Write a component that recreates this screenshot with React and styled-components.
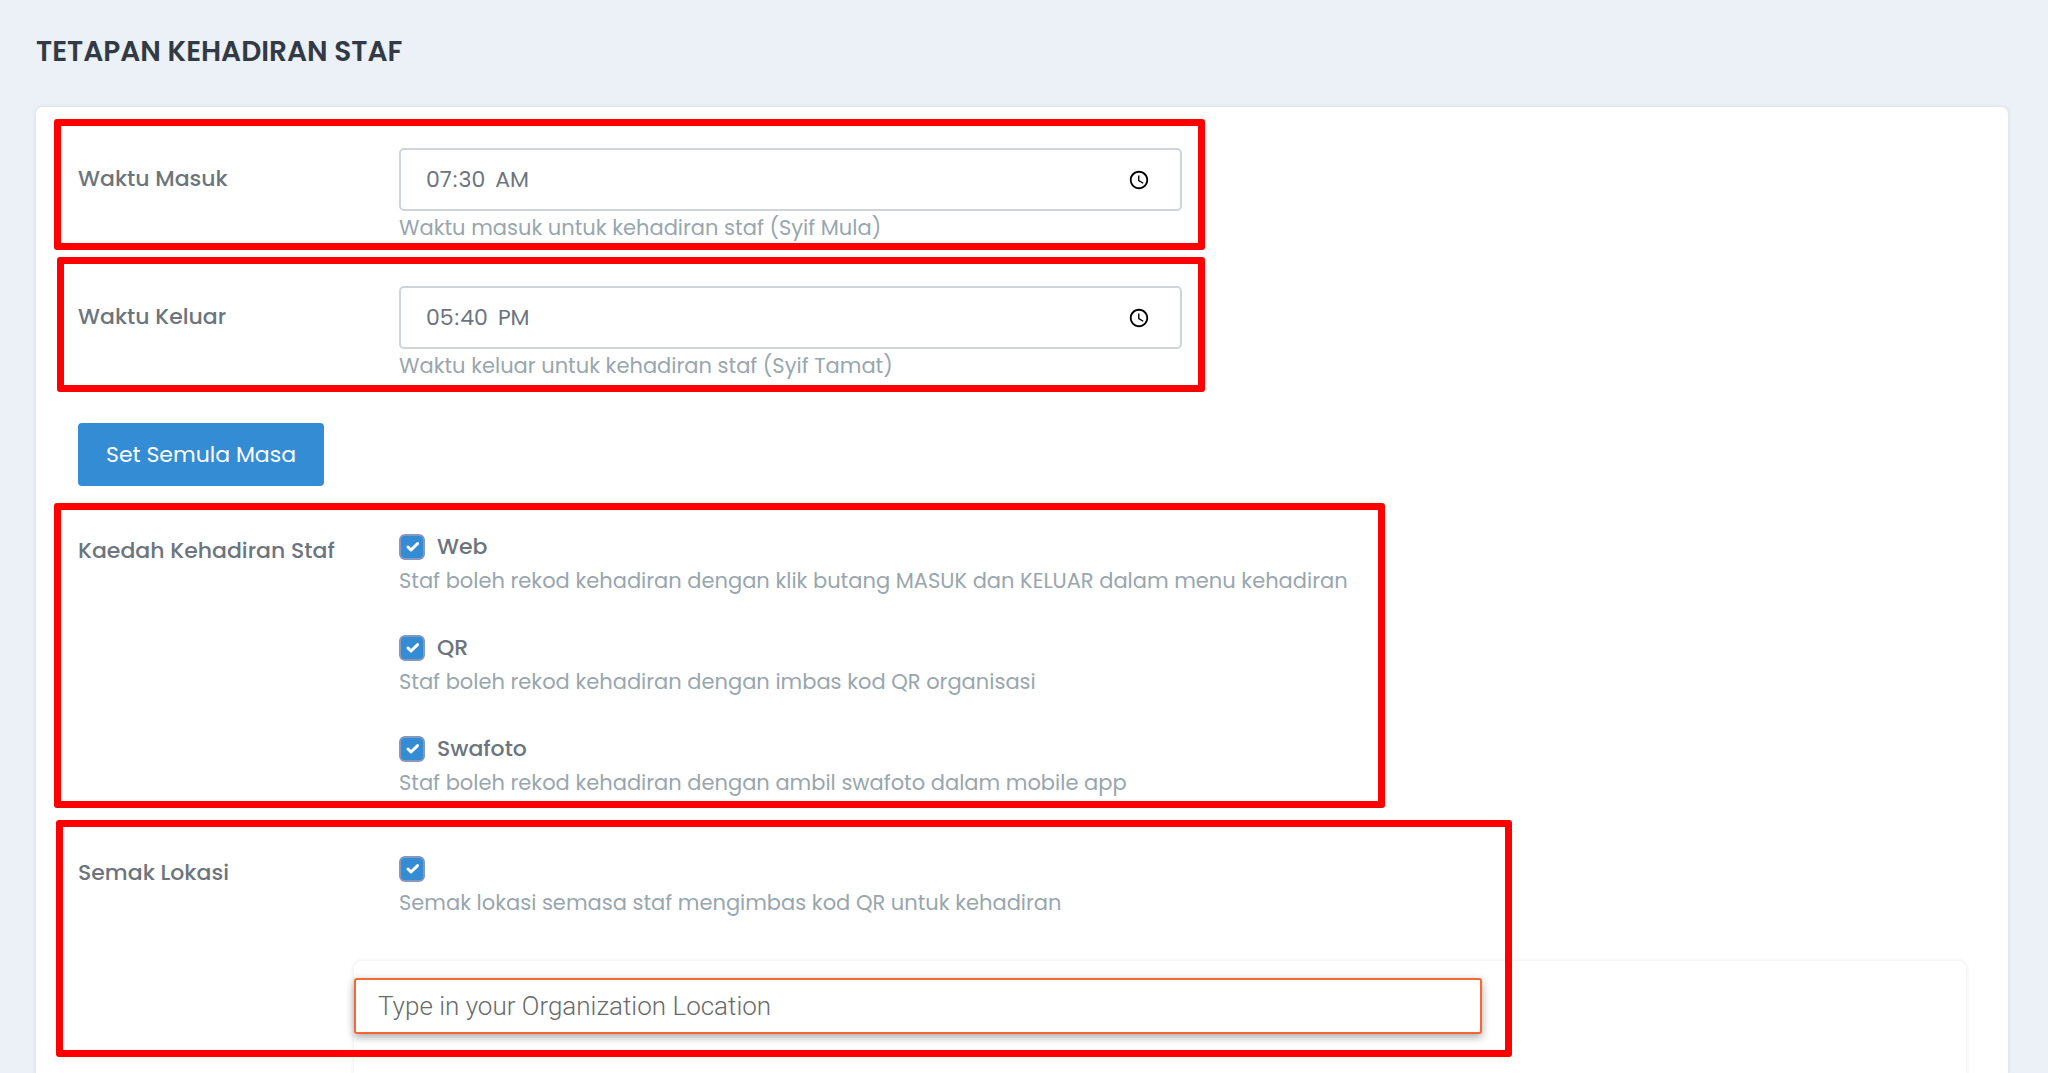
import React, { useState } from "react";
import styled, { createGlobalStyle } from "styled-components";

const GlobalStyle = createGlobalStyle`
  *, *::before, *::after { box-sizing: border-box; }
  body {
    margin: 0;
    background: #ebf1f6;
    color: #6c757d;
    font-family: Poppins, Inter, "Liberation Sans", sans-serif;
    font-size: 22px;
    line-height: 32px;
  }
`;

const Page = styled.main`
  display: flex;
  flex-direction: column;
  min-height: 100vh;
  padding: 32px 40px 0 36px;
`;

const Title = styled.h1`
  margin: 0 0 36px;
  color: #323a46;
  font-size: 28px;
  font-weight: 600;
  line-height: 39px;
  text-transform: uppercase;
`;

const Card = styled.section`
  flex: 1;
  display: flex;
  flex-direction: column;
  padding: 12px 42px 0;
  background: #fff;
  border-radius: 7px 7px 0 0;
  box-shadow: 0 0 4px rgba(108, 135, 155, 0.2);
`;

const Section = styled.div`
  position: relative;
  display: flex;
  padding-top: ${(p) => p.$top}px;
  padding-bottom: ${(p) => p.$bottom}px;
`;

const Highlight = styled.div`
  position: absolute;
  top: ${(p) => p.$top || 0}px;
  bottom: ${(p) => p.$bottom || 0}px;
  left: ${(p) => p.$left || -24}px;
  width: ${(p) => p.$width}px;
  border: 7px solid #f00;
  border-radius: 3px;
  pointer-events: none;
`;

const LabelColumn = styled.div`
  flex: 0 0 17%;
  padding-top: ${(p) => p.$top}px;
  font-weight: 500;
`;

const FieldColumn = styled.div`
  flex: 1;
  display: flex;
  flex-direction: column;
  gap: 34px;
  min-width: 0;
`;

const TimeInput = styled.input`
  display: block;
  width: 50%;
  height: 63px;
  padding: 0 30px 0 24px;
  border: 2px solid #ced4da;
  border-radius: 5px;
  background: #fff;
  color: #6c757d;
  font: inherit;
  outline: none;

  &::-webkit-datetime-edit-ampm-field {
    margin-left: 5px;
  }

  &::-webkit-calendar-picker-indicator {
    width: 22px;
    height: 22px;
    padding: 0;
  }
`;

const Help = styled.small`
  display: block;
  color: #98a6ad;
  font-size: 21px;
  line-height: 33px;
`;

const CheckLabel = styled.label`
  display: flex;
  align-items: center;
  gap: 12px;
  height: 34px;
  font-weight: 500;
`;

const CheckBoxFrame = styled.span`
  position: relative;
  display: flex;
`;

const CheckInput = styled.input`
  appearance: none;
  width: 26px;
  height: 26px;
  margin: 0;
  border: 2px solid #8698bd;
  border-radius: 6px;
  background: #fff;

  &:checked { background: #348cd4; }
`;

const CheckMark = styled.svg`
  position: absolute;
  inset: 0;
  width: 26px;
  height: 26px;
  fill: none;
  stroke: #fff;
  stroke-width: 3;
  stroke-linecap: round;
  stroke-linejoin: round;
  pointer-events: none;
`;

const ResetRow = styled.div`
  padding: 31px 0 17px;
`;

const ResetButton = styled.button`
  height: 63px;
  padding: 0 28px;
  border: 0;
  border-radius: 4px;
  background: #348cd4;
  color: #fff;
  font: inherit;
`;

const MapCard = styled.div`
  flex: 1;
  min-height: 113px;
  margin-left: 276px;
  padding-top: 17px;
  border-radius: 7px 7px 0 0;
  box-shadow: 0 0 4px rgba(50, 58, 70, 0.12);
`;

const LocationInput = styled.input`
  display: block;
  width: 70%;
  height: 56px;
  padding: 0 22px;
  border: 2px solid #fa6534;
  border-radius: 3px;
  background: #fff;
  box-shadow: 0 3px 9px rgba(0, 0, 0, 0.35);
  font-family: Roboto, sans-serif;
  font-size: 26px;
  font-weight: 300;
  outline: none;

  &::placeholder { color: #6a6a6a; opacity: 1; }
`;

function TimeField({ id, label, value, help, top, bottom, children }) {
  return (
    <Section $top={top} $bottom={bottom}>
      <LabelColumn as="label" htmlFor={id} $top={15}>{label}</LabelColumn>
      <FieldColumn>
        <div>
          <TimeInput id={id} type="time" defaultValue={value} />
          <Help>{help}</Help>
        </div>
      </FieldColumn>
      {children}
    </Section>
  );
}

function CheckField({ id, label, ariaLabel, help }) {
  const [checked, setChecked] = useState(true);
  return (
    <div>
      <CheckLabel htmlFor={id}>
        <CheckBoxFrame>
          <CheckInput
            id={id}
            type="checkbox"
            aria-label={ariaLabel}
            checked={checked}
            onChange={(e) => setChecked(e.target.checked)}
          />
          {checked && (
            <CheckMark viewBox="0 0 26 26" aria-hidden="true">
              <path d="M9 13 12 16 18.6 9.6" />
            </CheckMark>
          )}
        </CheckBoxFrame>
        {label}
      </CheckLabel>
      <Help>{help}</Help>
    </div>
  );
}

export default function App() {
  return (
    <>
      <GlobalStyle />
      <Page>
        <Title>Tetapan Kehadiran Staf</Title>
        <Card>
          <TimeField
            id="masuk"
            label="Waktu Masuk"
            value="07:30"
            help="Waktu masuk untuk kehadiran staf (Syif Mula)"
            top={29}
            bottom={6}
          >
            <Highlight $width={1151} />
          </TimeField>
          <TimeField
            id="keluar"
            label="Waktu Keluar"
            value="17:40"
            help="Waktu keluar untuk kehadiran staf (Syif Tamat)"
            top={36}
            bottom={10}
          >
            <Highlight $top={7} $left={-21} $width={1148} />
          </TimeField>
          <ResetRow>
            <ResetButton type="button">Set Semula Masa</ResetButton>
          </ResetRow>
          <Section $top={27} $bottom={9}>
            <LabelColumn $top={5}>Kaedah Kehadiran Staf</LabelColumn>
            <FieldColumn>
              <CheckField
                id="web"
                label="Web"
                help="Staf boleh rekod kehadiran dengan klik butang MASUK dan KELUAR dalam menu kehadiran"
              />
              <CheckField
                id="qr"
                label="QR"
                help="Staf boleh rekod kehadiran dengan imbas kod QR organisasi"
              />
              <CheckField
                id="swafoto"
                label="Swafoto"
                help="Staf boleh rekod kehadiran dengan ambil swafoto dalam mobile app"
              />
            </FieldColumn>
            <Highlight $width={1331} />
          </Section>
          <Section $top={44} $bottom={42}>
            <LabelColumn $top={5}>Semak Lokasi</LabelColumn>
            <FieldColumn>
              <CheckField
                id="lokasi"
                ariaLabel="Semak Lokasi"
                help="Semak lokasi semasa staf mengimbas kod QR untuk kehadiran"
              />
            </FieldColumn>
            <Highlight $top={12} $bottom={-96} $left={-22} $width={1456} />
          </Section>
          <MapCard>
            <LocationInput
              type="text"
              aria-label="Organization Location"
              placeholder="Type in your Organization Location"
            />
          </MapCard>
        </Card>
      </Page>
    </>
  );
}
